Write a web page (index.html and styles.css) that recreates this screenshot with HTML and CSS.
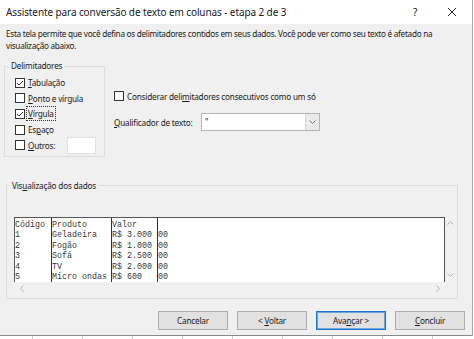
FILE: index.html
```html
<!DOCTYPE html>
<html lang="pt-BR">
<head>
<meta charset="utf-8">
<title>Assistente para conversão de texto em colunas</title>
<link rel="stylesheet" href="styles.css">
</head>
<body>
<div class="screen">
  <div class="dialog">
    <div class="titlebar">
      <span class="title">Assistente para conversão de texto em colunas - etapa 2 de 3</span>
      <span class="help">?</span>
      <span class="close"><svg width="10" height="10" viewBox="0 0 10 10"><path d="M1 1 L9 9 M9 1 L1 9" stroke="#222" stroke-width="1" fill="none"/></svg></span>
    </div>
    <div class="body">
      <p class="desc">Esta tela permite que você defina os delimitadores contidos em seus dados. Você pode ver como seu texto é afetado na<br>visualização abaixo.</p>
      <div class="top">
        <fieldset class="group delims">
          <legend>Delimitadores</legend>
          <div class="checks">
            <div class="row"><span class="cb"><svg width="8" height="8" viewBox="0 0 8 8"><path d="M1 4 L3 6 L7 2" stroke="#333" stroke-width="1" fill="none"/></svg></span><span><u>T</u>abulação</span></div>
            <div class="row"><span class="cb"></span><span><u>P</u>onto e vírgula</span></div>
            <div class="row"><span class="cb"><svg width="8" height="8" viewBox="0 0 8 8"><path d="M1 4 L3 6 L7 2" stroke="#333" stroke-width="1" fill="none"/></svg></span><span class="focus"><u>V</u>írgula</span></div>
            <div class="row"><span class="cb"></span><span>Es<u>p</u>aço</span></div>
            <div class="row"><span class="cb"></span><span><u>O</u>utros:</span><span class="textbox"></span></div>
          </div>
        </fieldset>
        <div class="options">
          <div class="row"><span class="cb"></span><span>Considerar deli<u>m</u>itadores consecutivos como um só</span></div>
          <div class="qual">
            <span class="qlabel"><u>Q</u>ualificador de texto:</span>
            <div class="combo">
              <span class="val">"</span>
              <span class="arrow"><svg width="7" height="4" viewBox="0 0 7 4"><path d="M0.5 0.5 L3.5 3.5 L6.5 0.5" stroke="#777" stroke-width="1" fill="none"/></svg></span>
            </div>
          </div>
        </div>
      </div>
      <fieldset class="group preview-group">
        <legend>Vis<u>u</u>alização dos dados</legend>
        <div class="preview">
          <div class="data">
            <div class="col c1"><div>Código</div><div>1</div><div>2</div><div>3</div><div>4</div><div>5</div></div>
            <div class="col c2"><div>Produto</div><div>Geladeira</div><div>Fogão</div><div>Sofá</div><div>TV</div><div>Micro ondas</div></div>
            <div class="col c3"><div>Valor</div><div>R$ 3.000</div><div>R$ 1.000</div><div>R$ 2.500</div><div>R$ 2.000</div><div>R$ 600</div></div>
            <div class="col c4"><div>&nbsp;</div><div>00</div><div>00</div><div>00</div><div>00</div><div>00</div></div>
          </div>
          <div class="vscroll">
            <svg width="7" height="4" viewBox="0 0 7 4"><path d="M0.5 3.5 L3.5 0.5 L6.5 3.5" stroke="#b0b0b0" stroke-width="1" fill="none"/></svg>
            <svg width="7" height="4" viewBox="0 0 7 4"><path d="M0.5 0.5 L3.5 3.5 L6.5 0.5" stroke="#b0b0b0" stroke-width="1" fill="none"/></svg>
          </div>
          <div class="hscroll">
            <svg width="4" height="7" viewBox="0 0 4 7"><path d="M3.5 0.5 L0.5 3.5 L3.5 6.5" stroke="#b0b0b0" stroke-width="1" fill="none"/></svg>
            <svg width="4" height="7" viewBox="0 0 4 7"><path d="M0.5 0.5 L3.5 3.5 L0.5 6.5" stroke="#b0b0b0" stroke-width="1" fill="none"/></svg>
          </div>
          <div class="corner"></div>
        </div>
      </fieldset>
      <div class="buttons">
        <button class="btn">Cancelar</button>
        <button class="btn">&lt; <u>V</u>oltar</button>
        <button class="btn default">Ava<u>n</u>çar &gt;</button>
        <button class="btn"><u>C</u>oncluir</button>
      </div>
    </div>
  </div>
  <div class="sheet"></div>
</div>
</body>
</html>
```
FILE: styles.css
```css
* { box-sizing: border-box; }
body { margin: 0; background: #fff; }
.screen {
  width: 474px; height: 339px; overflow: hidden; background: #fff;
  font-family: "Noto Sans", "Liberation Sans", sans-serif; color: #1a1a1a;
}
.dialog {
  width: 473px; height: 336px;
  border-right: 1px solid #a8a8a8; border-bottom: 1px solid #8a8a8a;
  background: #f0f0f0; display: flex; flex-direction: column;
}
.titlebar {
  height: 24px; flex: none; background: #fff; display: flex; align-items: center;
  padding-left: 6px; padding-right: 10px; font-size: 10px; letter-spacing: -0.1px; color: #1a1a1a;
}
.title { flex: 1; white-space: nowrap; }
.help { width: 20px; text-align: center; margin-right: 17px; }
.close { width: 20px; display: flex; justify-content: center; }
.body {
  flex: 1; display: flex; flex-direction: column;
  padding: 0 7px 0 4px; font-size: 8.2px; letter-spacing: -0.2px;
}
.desc { margin: 4px 0 0 2px; line-height: 12px; white-space: nowrap; letter-spacing: -0.28px; }
.top { display: flex; margin-top: 8px; }
.group { margin: 0; padding: 0; border: 1px solid #dcdcdc; min-width: 0; }
.group legend { padding: 0 2px; line-height: 12px; }
.delims { width: 101px; }
.delims legend { margin-left: 4px; }
.checks { padding: 3px 8px 3px 10px; }
.row { display: flex; align-items: center; height: 15.6px; white-space: nowrap; }
.cb {
  width: 10px; height: 10px; border: 1px solid #333; background: #fff;
  margin-right: 3px; flex: none; display: flex; align-items: center; justify-content: center;
}
.focus { outline: 1px dotted #333; padding: 0 1px; margin-left: -1px; line-height: 13px; }
.textbox {
  margin-left: auto; width: 29px; height: 17px; background: #fff;
  border: 1px solid #e2e2e2; flex: none;
}
.options { margin-left: 9px; padding-top: 29px; }
.options .row { height: 14px; }
.qual { display: flex; align-items: center; margin-top: 10px; white-space: nowrap; }
.qlabel { width: 87px; }
.combo {
  width: 119px; height: 18px; border: 1px solid #b4b4b4; background: #fff; display: flex;
}
.val { flex: 1; padding-left: 3px; line-height: 15px; }
.arrow {
  width: 14px; background: #eaeaea; border-left: 1px solid #d6d6d6;
  display: flex; align-items: center; justify-content: center;
}
.preview-group { margin: 23px 7px 0 2px; padding: 0 0 3px 7px; }
.preview-group legend { margin-left: -4px; }
.preview {
  margin-top: 25px; display: grid;
  grid-template-columns: 431px 18px; grid-template-rows: 65px 13px;
}
.data {
  background: #fff; border: 1px solid #555; border-bottom: none;
  display: flex; font-family: "Liberation Mono", monospace; font-size: 8.33px;
  letter-spacing: 0; line-height: 10.4px; color: #383838; white-space: pre;
}
.col { height: 100%; padding-top: 2px; }
.c1 { width: 36px; }
.c2 { width: 60px; border-left: 1px solid #333; }
.c3 { width: 46px; border-left: 1px solid #333; }
.c4 { flex: 1; border-left: 1px solid #333; }
.col > div { height: 10.4px; }
.vscroll {
  display: flex; flex-direction: column; justify-content: space-between;
  padding: 4px 0 5px 2px;
}
.hscroll {
  display: flex; justify-content: space-between; align-items: center;
  padding: 0 5px 0 6px;
}
.buttons { display: flex; justify-content: flex-end; gap: 9px; margin-top: 12px; }
.btn {
  width: 70px; height: 19px; padding: 0; font: inherit; letter-spacing: inherit; color: #1a1a1a;
  background: #e1e1e1; border: 1px solid #adadad;
}
.btn.default { border-color: #1f74c9; box-shadow: inset 0 0 0 1px #6aa5dc; }
.sheet {
  height: 3px; width: 474px;
  background: repeating-linear-gradient(to right, transparent 0 32px, #cfcfcf 32px 33px, transparent 33px 50px);
}
```
